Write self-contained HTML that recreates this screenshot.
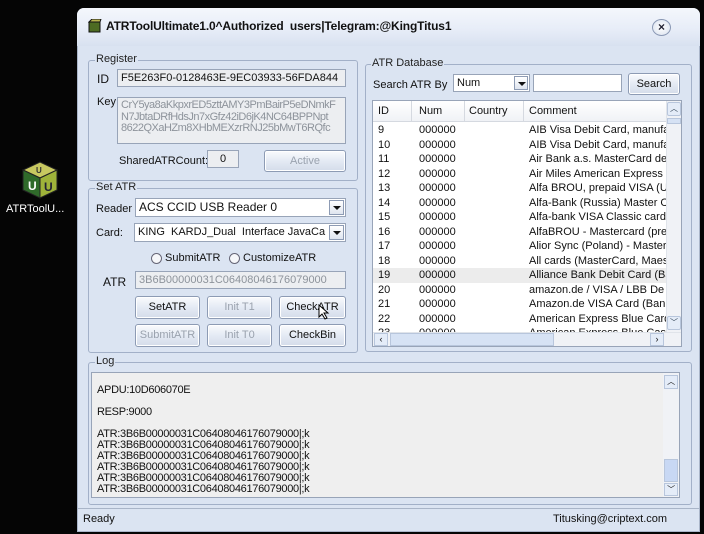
<!DOCTYPE html>
<html><head><style>
*{box-sizing:border-box;margin:0;padding:0}
body{width:704px;height:534px;background:#050505;position:relative;overflow:hidden;font-family:"Liberation Sans",sans-serif;font-size:11px;color:#111}
.a{position:absolute}
.win{left:77px;top:8px;width:623px;height:524px;background:#dbe4f2;border-radius:7px 7px 0 0;border:1px solid #aab6ca}
.title{left:77px;top:8px;width:623px;height:38px;border-radius:7px 7px 0 0;background:linear-gradient(#f4f7fc,#e6ecf7 60%,#d8e1f0)}
.fs{border:1px solid #a2b0c8;border-radius:3px}
.lg{background:#dbe4f2;padding:0 1px;font-size:11px;color:#222}
.inp{background:#eceef1;border:1px solid #98a4b8;font-size:11px;padding:0 3px;white-space:nowrap;overflow:hidden;line-height:16px}
.wh{background:#fff}
.btn{border:1px solid #8d9bb4;border-radius:3px;background:linear-gradient(#fafbfd,#e4eaf4 50%,#d4dcea);text-align:center;font-size:11px;color:#111;box-shadow:inset 0 0 0 1px #fff}
.dis{color:#9aa2ae}
.dd{width:15px;height:15px;border:1px solid #8d9bb4;background:linear-gradient(#fff,#dfe5ef);right:1px;top:1px}
.dd:after{content:"";position:absolute;left:3px;top:5px;border:4px solid transparent;border-top:4px solid #111}
.row{position:absolute;left:0;height:14.5px;width:293px;font-size:11px}
.row span{position:absolute;top:1px;white-space:nowrap;overflow:hidden}
.log div{font-size:11px;line-height:11px;letter-spacing:-0.3px}
</style></head><body>
<svg class="a" style="left:20px;top:160px" width="40" height="40" viewBox="0 0 40 40">
<polygon points="20,2 37,10 20,18 3,10" fill="#c8c860" stroke="#222"/>
<polygon points="3,10 20,18 20,38 3,30" fill="#2f6a2a" stroke="#222"/>
<polygon points="37,10 20,18 20,38 37,30" fill="#9fb33a" stroke="#222"/>
<text x="8" y="30" font-size="12" font-weight="bold" fill="#fff" font-family="Liberation Sans">U</text>
<text x="24" y="31" font-size="12" font-weight="bold" fill="#223" font-family="Liberation Sans">U</text>
<text x="16" y="13" font-size="8" font-weight="bold" fill="#333" font-family="Liberation Sans">U</text>
</svg>
<div class="a" style="left:6px;top:203px;color:#fff;font-size:11px">ATRToolU...</div>

<div class="a win"></div>
<div class="a title"></div>
<svg class="a" style="left:88px;top:19px" width="14" height="14"><rect x="1" y="3" width="11" height="10" fill="#4d6b22" stroke="#111"/><polygon points="1,3 4,0 13,0 12,3" fill="#b6b44e" stroke="#111"/></svg>
<div class="a" style="left:106px;top:19px;font-weight:bold;font-size:12px;color:#111;letter-spacing:-0.15px">ATRToolUltimate1.0^Authorized&nbsp; users|Telegram:@KingTitus1</div>
<div class="a" style="left:652px;top:19px;width:19px;height:17px;border-radius:50%;border:1px solid #8a98b4;background:radial-gradient(#fff,#d8e0ee);text-align:center;font-weight:bold;font-size:12px;line-height:15px;color:#223">×</div>

<div class="a fs" style="left:88px;top:60px;width:270px;height:121px"></div>
<div class="a lg" style="left:95px;top:53px">Register</div>
<div class="a" style="left:97px;top:72px;font-size:12px">ID</div>
<div class="a inp" style="left:117px;top:69px;width:229px;height:18px;font-size:11px;color:#111">F5E263F0-0128463E-9EC03933-56FDA844</div>
<div class="a" style="left:97px;top:96px">Key</div>
<div class="a inp" style="left:117px;top:97px;width:229px;height:47px;color:#8d939b;line-height:11.5px;white-space:normal;letter-spacing:-0.5px;padding-top:2px">CrY5ya8aKkpxrED5zttAMY3PmBairP5eDNmkF<br>N7JbtaDRfHdsJn7xGfz42iD6jK4NC64BPPNpt<br>8622QXaHZm8XHbMEXzrRNJ25bMwT6RQfc</div>
<div class="a" style="left:119px;top:155px">SharedATRCount:</div>
<div class="a inp" style="left:207px;top:150px;width:32px;height:18px;text-align:center">0</div>
<div class="a btn dis" style="left:264px;top:150px;width:82px;height:22px;line-height:20px">Active</div>

<div class="a fs" style="left:88px;top:188px;width:270px;height:165px"></div>
<div class="a lg" style="left:95px;top:181px">Set ATR</div>
<div class="a" style="left:96px;top:203px">Reader</div>
<div class="a inp wh" style="left:135px;top:198px;width:211px;height:19px;font-size:12px;line-height:17px">ACS CCID USB Reader 0<div class="a dd"></div></div>
<div class="a" style="left:96px;top:227px">Card:</div>
<div class="a inp wh" style="left:134px;top:223px;width:212px;height:19px;line-height:17px">KING&nbsp; KARDJ_Dual&nbsp; Interface JavaCa<div class="a dd"></div></div>
<div class="a" style="left:151px;top:253px;width:11px;height:11px;border:1px solid #667;border-radius:50%;background:#f6f7fa"></div>
<div class="a" style="left:165px;top:252px">SubmitATR</div>
<div class="a" style="left:229px;top:253px;width:11px;height:11px;border:1px solid #667;border-radius:50%;background:#f6f7fa"></div>
<div class="a" style="left:243px;top:252px">CustomizeATR</div>
<div class="a" style="left:103px;top:275px;font-size:12px">ATR</div>
<div class="a inp" style="left:135px;top:271px;width:211px;height:18px;color:#8d939b">3B6B00000031C06408046176079000</div>
<div class="a btn" style="left:135px;top:296px;width:65px;height:23px;line-height:21px">SetATR</div>
<div class="a btn dis" style="left:207px;top:296px;width:65px;height:23px;line-height:21px">Init T1</div>
<div class="a btn" style="left:279px;top:296px;width:67px;height:23px;line-height:21px">CheckATR</div>
<div class="a btn dis" style="left:135px;top:324px;width:65px;height:23px;line-height:21px">SubmitATR</div>
<div class="a btn dis" style="left:207px;top:324px;width:65px;height:23px;line-height:21px">Init T0</div>
<div class="a btn" style="left:279px;top:324px;width:67px;height:23px;line-height:21px">CheckBin</div>
<svg class="a" style="left:318px;top:304px" width="12" height="16"><polygon points="1,1 1,13 4,10 7,15 9,14 6,9 10,9" fill="#fff" stroke="#000"/></svg>

<div class="a fs" style="left:365px;top:64px;width:327px;height:288px"></div>
<div class="a lg" style="left:371px;top:57px">ATR Database</div>
<div class="a" style="left:373px;top:79px">Search ATR By</div>
<div class="a inp wh" style="left:453px;top:74px;width:77px;height:18px">Num<div class="a dd" style="width:14px;height:14px"></div></div>
<div class="a inp wh" style="left:533px;top:74px;width:89px;height:18px"></div>
<div class="a btn" style="left:628px;top:73px;width:52px;height:22px;line-height:20px">Search</div>
<div class="a" style="left:372px;top:100px;width:310px;height:247px;border:1px solid #98a4b8;background:#fff;overflow:hidden">
 <div class="a" style="left:0;top:0;width:293px;height:21px;background:linear-gradient(#fff,#f0f2f6);border-bottom:1px solid #d5d9e0"></div>
 <div class="a" style="left:5px;top:4px">ID</div><div class="a" style="left:38px;top:0;width:1px;height:21px;background:#d5d9e0"></div>
 <div class="a" style="left:46px;top:4px">Num</div><div class="a" style="left:91px;top:0;width:1px;height:21px;background:#d5d9e0"></div>
 <div class="a" style="left:96px;top:4px">Country</div><div class="a" style="left:150px;top:0;width:1px;height:21px;background:#d5d9e0"></div>
 <div class="a" style="left:156px;top:4px">Comment</div>
 <div class="a" style="left:0;top:22px;width:293px;height:210px">
  <div class="row" style="top:0"><span style="left:5px">9</span><span style="left:46px">000000</span><span style="left:156px;width:137px">AIB Visa Debit Card, manufac</span></div>
  <div class="row" style="top:14.5px"><span style="left:5px">10</span><span style="left:46px">000000</span><span style="left:156px;width:137px">AIB Visa Debit Card, manufac</span></div>
  <div class="row" style="top:29px"><span style="left:5px">11</span><span style="left:46px">000000</span><span style="left:156px;width:137px">Air Bank a.s. MasterCard debit</span></div>
  <div class="row" style="top:43.5px"><span style="left:5px">12</span><span style="left:46px">000000</span><span style="left:156px;width:137px">Air Miles American Express c</span></div>
  <div class="row" style="top:58px"><span style="left:5px">13</span><span style="left:46px">000000</span><span style="left:156px;width:137px">Alfa BROU, prepaid VISA (U</span></div>
  <div class="row" style="top:72.5px"><span style="left:5px">14</span><span style="left:46px">000000</span><span style="left:156px;width:137px">Alfa-Bank (Russia) Master Ca</span></div>
  <div class="row" style="top:87px"><span style="left:5px">15</span><span style="left:46px">000000</span><span style="left:156px;width:137px">Alfa-bank VISA Classic card</span></div>
  <div class="row" style="top:101.5px"><span style="left:5px">16</span><span style="left:46px">000000</span><span style="left:156px;width:137px">AlfaBROU - Mastercard (prep</span></div>
  <div class="row" style="top:116px"><span style="left:5px">17</span><span style="left:46px">000000</span><span style="left:156px;width:137px">Alior Sync (Poland) - MasterC</span></div>
  <div class="row" style="top:130.5px"><span style="left:5px">18</span><span style="left:46px">000000</span><span style="left:156px;width:137px">All cards (MasterCard, Maest</span></div>
  <div class="row" style="top:145px;background:#ececec"><span style="left:5px">19</span><span style="left:46px">000000</span><span style="left:156px;width:137px">Alliance Bank Debit Card (Ba</span></div>
  <div class="row" style="top:159.5px"><span style="left:5px">20</span><span style="left:46px">000000</span><span style="left:156px;width:137px">amazon.de / VISA / LBB De</span></div>
  <div class="row" style="top:174px"><span style="left:5px">21</span><span style="left:46px">000000</span><span style="left:156px;width:137px">Amazon.de VISA Card (Bank</span></div>
  <div class="row" style="top:188.5px"><span style="left:5px">22</span><span style="left:46px">000000</span><span style="left:156px;width:137px">American Express Blue Card</span></div>
  <div class="row" style="top:203px"><span style="left:5px">23</span><span style="left:46px">000000</span><span style="left:156px;width:137px">American Express Blue Cash</span></div>
 </div>
 <div class="a" style="left:293px;top:0;width:16px;height:231px;background:#f0f2f6;border-left:1px solid #e0e4ea"></div>
 <div class="a" style="left:294px;top:1px;width:14px;height:14px;border:1px solid #b8c6dc;border-radius:2px;background:#e4ecf8;font-size:8px;text-align:center;line-height:12px;color:#345">︿</div>
 <div class="a" style="left:294px;top:17px;width:14px;height:6px;border:1px solid #b8c6dc;background:#d6e2f4"></div>
 <div class="a" style="left:294px;top:215px;width:14px;height:14px;border:1px solid #b8c6dc;border-radius:2px;background:#e4ecf8;font-size:8px;text-align:center;line-height:12px;color:#345">﹀</div>
 <div class="a" style="left:0;top:231px;width:309px;height:15px;background:#f0f2f6;border-top:1px solid #e0e4ea"></div>
 <div class="a" style="left:1px;top:232px;width:14px;height:13px;border:1px solid #b8c6dc;background:#e4ecf8;font-size:9px;line-height:11px;text-align:center">‹</div>
 <div class="a" style="left:17px;top:232px;width:164px;height:13px;border:1px solid #b8c6dc;background:#d6e2f4"></div>
 <div class="a" style="left:277px;top:232px;width:14px;height:13px;border:1px solid #b8c6dc;background:#e4ecf8;font-size:9px;line-height:11px;text-align:center">›</div>
</div>

<div class="a fs" style="left:88px;top:362px;width:604px;height:143px"></div>
<div class="a lg" style="left:95px;top:355px">Log</div>
<div class="a log" style="left:91px;top:372px;width:589px;height:126px;border:1px solid #98a4b8;background:#efefef">
 <div class="a" style="left:5px;top:12px">APDU:10D606070E</div>
 <div class="a" style="left:5px;top:34px">RESP:9000</div>
 <div class="a" style="left:5px;top:56px">ATR:3B6B00000031C06408046176079000|;k</div>
 <div class="a" style="left:5px;top:67px">ATR:3B6B00000031C06408046176079000|;k</div>
 <div class="a" style="left:5px;top:78px">ATR:3B6B00000031C06408046176079000|;k</div>
 <div class="a" style="left:5px;top:89px">ATR:3B6B00000031C06408046176079000|;k</div>
 <div class="a" style="left:5px;top:100px">ATR:3B6B00000031C06408046176079000|;k</div>
 <div class="a" style="left:5px;top:111px">ATR:3B6B00000031C06408046176079000|;k</div>
 <div class="a" style="left:571px;top:0;width:16px;height:124px;background:#f0f2f6"></div>
 <div class="a" style="left:572px;top:2px;width:14px;height:14px;border:1px solid #b8c6dc;background:#e4ecf8;font-size:8px;text-align:center;line-height:12px">︿</div>
 <div class="a" style="left:572px;top:86px;width:14px;height:23px;border:1px solid #b8c6dc;background:#c8d8f4"></div>
 <div class="a" style="left:572px;top:110px;width:14px;height:13px;border:1px solid #b8c6dc;background:#e4ecf8;font-size:8px;text-align:center;line-height:11px">﹀</div>
</div>

<div class="a" style="left:78px;top:508px;width:621px;height:1px;background:#a9b5c8"></div>
<div class="a" style="left:83px;top:513px;font-size:11px">Ready</div>
<div class="a" style="left:553px;top:513px;font-size:11px">Titusking@criptext.com</div>
</body></html>
